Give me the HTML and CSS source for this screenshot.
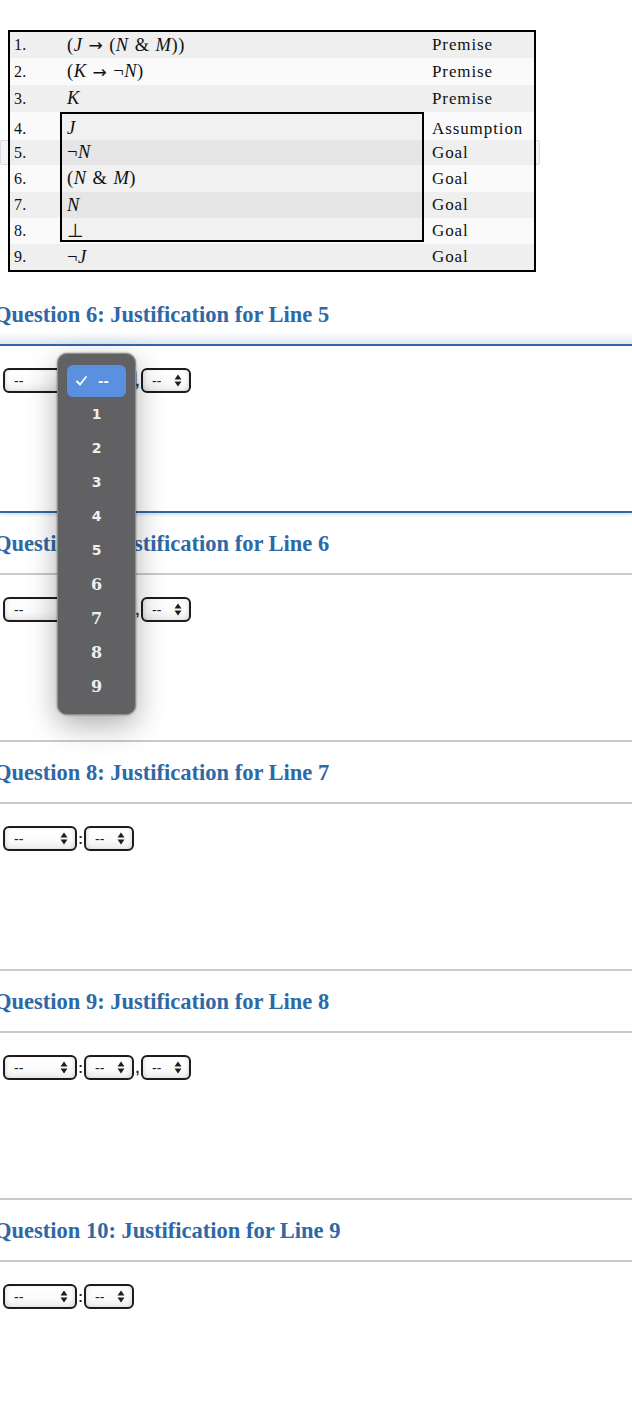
FILE: index.html
```html
<!DOCTYPE html>
<html>
<head>
<meta charset="utf-8">
<link rel="stylesheet" href="styles.css">
</head>
<body>
<div class="page">
  <div class="proof-wrap">
    <div class="row-hl"></div>
    <div class="proof">
      <div class="c num odd r1">1.</div><div class="c fm odd r1">(<i>J</i><span class="op">→</span>(<i>N</i><span class="amp">&amp;</span><i>M</i>))</div><div class="c just odd r1">Premise</div>
      <div class="c num even r2">2.</div><div class="c fm even r2">(<i>K</i><span class="op">→</span>¬<i>N</i>)</div><div class="c just even r2">Premise</div>
      <div class="c num odd r3">3.</div><div class="c fm odd r3"><i>K</i></div><div class="c just odd r3">Premise</div>
      <div class="c num even r4">4.</div><div class="c fm even r4"><i>J</i></div><div class="c just even r4">Assumption</div>
      <div class="c num odd r5">5.</div><div class="c fm odd r5">¬<i>N</i></div><div class="c just odd r5">Goal</div>
      <div class="c num even r6">6.</div><div class="c fm even r6">(<i>N</i><span class="amp">&amp;</span><i>M</i>)</div><div class="c just even r6">Goal</div>
      <div class="c num odd r7">7.</div><div class="c fm odd r7"><i>N</i></div><div class="c just odd r7">Goal</div>
      <div class="c num even r8">8.</div><div class="c fm even r8">⊥</div><div class="c just even r8">Goal</div>
      <div class="c num odd r9">9.</div><div class="c fm odd r9">¬<i>J</i></div><div class="c just odd r9">Goal</div>
      <div class="sub"></div>
    </div>
  </div>

  <section class="q active">
    <div class="qh">Question 6: Justification for Line 5</div>
    <div class="qc">
      <span class="sel wide"><span class="val">--</span><svg class="arr" width="8" height="13" viewBox="0 0 8 13"><polygon points="0.5,5.5 4,0.5 7.5,5.5"/><polygon points="0.5,7.5 4,12.5 7.5,7.5"/></svg></span><span class="sep">:</span><span class="sel narrow focus"><span class="val">--</span><svg class="arr" width="8" height="13" viewBox="0 0 8 13"><polygon points="0.5,5.5 4,0.5 7.5,5.5"/><polygon points="0.5,7.5 4,12.5 7.5,7.5"/></svg></span><span class="sep">,</span><span class="sel narrow"><span class="val">--</span><svg class="arr" width="8" height="13" viewBox="0 0 8 13"><polygon points="0.5,5.5 4,0.5 7.5,5.5"/><polygon points="0.5,7.5 4,12.5 7.5,7.5"/></svg></span>
    </div>
  </section>

  <section class="q after-active">
    <div class="qh">Question 7: Justification for Line 6</div>
    <div class="qc">
      <span class="sel wide"><span class="val">--</span><svg class="arr" width="8" height="13" viewBox="0 0 8 13"><polygon points="0.5,5.5 4,0.5 7.5,5.5"/><polygon points="0.5,7.5 4,12.5 7.5,7.5"/></svg></span><span class="sep">:</span><span class="sel narrow"><span class="val">--</span><svg class="arr" width="8" height="13" viewBox="0 0 8 13"><polygon points="0.5,5.5 4,0.5 7.5,5.5"/><polygon points="0.5,7.5 4,12.5 7.5,7.5"/></svg></span><span class="sep">,</span><span class="sel narrow"><span class="val">--</span><svg class="arr" width="8" height="13" viewBox="0 0 8 13"><polygon points="0.5,5.5 4,0.5 7.5,5.5"/><polygon points="0.5,7.5 4,12.5 7.5,7.5"/></svg></span>
    </div>
  </section>

  <section class="q">
    <div class="qh">Question 8: Justification for Line 7</div>
    <div class="qc">
      <span class="sel wide"><span class="val">--</span><svg class="arr" width="8" height="13" viewBox="0 0 8 13"><polygon points="0.5,5.5 4,0.5 7.5,5.5"/><polygon points="0.5,7.5 4,12.5 7.5,7.5"/></svg></span><span class="sep">:</span><span class="sel narrow"><span class="val">--</span><svg class="arr" width="8" height="13" viewBox="0 0 8 13"><polygon points="0.5,5.5 4,0.5 7.5,5.5"/><polygon points="0.5,7.5 4,12.5 7.5,7.5"/></svg></span>
    </div>
  </section>

  <section class="q">
    <div class="qh">Question 9: Justification for Line 8</div>
    <div class="qc">
      <span class="sel wide"><span class="val">--</span><svg class="arr" width="8" height="13" viewBox="0 0 8 13"><polygon points="0.5,5.5 4,0.5 7.5,5.5"/><polygon points="0.5,7.5 4,12.5 7.5,7.5"/></svg></span><span class="sep">:</span><span class="sel narrow"><span class="val">--</span><svg class="arr" width="8" height="13" viewBox="0 0 8 13"><polygon points="0.5,5.5 4,0.5 7.5,5.5"/><polygon points="0.5,7.5 4,12.5 7.5,7.5"/></svg></span><span class="sep">,</span><span class="sel narrow"><span class="val">--</span><svg class="arr" width="8" height="13" viewBox="0 0 8 13"><polygon points="0.5,5.5 4,0.5 7.5,5.5"/><polygon points="0.5,7.5 4,12.5 7.5,7.5"/></svg></span>
    </div>
  </section>

  <section class="q">
    <div class="qh">Question 10: Justification for Line 9</div>
    <div class="qc">
      <span class="sel wide"><span class="val">--</span><svg class="arr" width="8" height="13" viewBox="0 0 8 13"><polygon points="0.5,5.5 4,0.5 7.5,5.5"/><polygon points="0.5,7.5 4,12.5 7.5,7.5"/></svg></span><span class="sep">:</span><span class="sel narrow"><span class="val">--</span><svg class="arr" width="8" height="13" viewBox="0 0 8 13"><polygon points="0.5,5.5 4,0.5 7.5,5.5"/><polygon points="0.5,7.5 4,12.5 7.5,7.5"/></svg></span>
    </div>
  </section>

  <div class="popup">
    <div class="opt chosen"><svg class="check" width="11" height="10" viewBox="0 0 11 10"><polyline points="1,5.5 4,8.5 10,1" fill="none" stroke="#fff" stroke-width="1.8" stroke-linecap="round" stroke-linejoin="round"/></svg><span>--</span></div>
    <div class="opt sans">1</div>
    <div class="opt sans">2</div>
    <div class="opt sans">3</div>
    <div class="opt sans">4</div>
    <div class="opt sans">5</div>
    <div class="opt serif">6</div>
    <div class="opt serif">7</div>
    <div class="opt serif">8</div>
    <div class="opt serif">9</div>
  </div>
</div>
</body>
</html>
```

FILE: styles.css
```css
html, body {
  margin: 0;
  padding: 0;
  background: #fff;
}
body {
  font-family: "Liberation Serif", serif;
  color: #111;
  overflow: hidden;
}
.page {
  position: relative;
  width: 632px;
  padding-top: 30px;
}

/* proof table */
.proof-wrap {
  position: relative;
  margin-left: 8px;
  width: 528px;
}
.row-hl {
  position: absolute;
  left: -8px;
  top: 110px;
  width: 540px;
  height: 25px;
  box-sizing: border-box;
  border: 1px solid #dcdcdc;
  background: #f4f4f4;
  border-radius: 2px;
}
.proof {
  position: relative;
  display: grid;
  grid-template-columns: 50px 364px 110px;
  grid-template-rows: 26px 27px 27px 28px 25px 27px 26px 26px 26px;
  border: 2px solid #000;
  background: #fafafa;
}
.c {
  display: flex;
  align-items: center;
  font-size: 17px;
  letter-spacing: 0.3px;
  white-space: nowrap;
}
.num { grid-column: 1; }
.fm { grid-column: 2; }
.just { grid-column: 3; }
.r1 { grid-row: 1; }
.r2 { grid-row: 2; }
.r3 { grid-row: 3; }
.r4 { grid-row: 4; padding-top: 5px; }
.r5 { grid-row: 5; }
.r6 { grid-row: 6; }
.r7 { grid-row: 7; }
.r8 { grid-row: 8; }
.r9 { grid-row: 9; }
.odd { background: #efefef; }
.even { background: #fafafa; }
.num {
  padding-left: 4px;
  font-size: 16px;
}
.fm {
  padding-left: 7px;
  font-size: 18.5px;
  letter-spacing: 0.5px;
}
.fm i {
  font-style: italic;
}
.op {
  margin: 0 6px;
  font-family: "DejaVu Sans", sans-serif;
  font-size: 17px;
}
.amp {
  margin: 0 6px;
}
.just {
  padding-left: 8px;
  font-size: 17px;
  letter-spacing: 0.9px;
}
.sub {
  grid-column: 2;
  grid-row: 4 / 9;
  margin-bottom: 2px;
  border: 2px solid #000;
  background: rgba(0, 0, 0, 0.035);
}

/* question sections */
.q {
  border-top: 2px solid #cacaca;
}
.q.active {
  margin-top: 10px;
  border-top-color: transparent;
  border-bottom: 2px solid #2f69a5;
  box-shadow: 0 2px 3px rgba(47, 105, 165, 0.18);
}
.q.after-active {
  border-top: none;
}
.qh {
  height: 62px;
  box-sizing: border-box;
  padding-top: 2px;
  display: flex;
  align-items: center;
  border-bottom: 2px solid #cacaca;
  text-indent: -6px;
  font-family: "Liberation Serif", serif;
  font-weight: bold;
  font-size: 22.5px;
  color: #2d68a7;
  white-space: nowrap;
}
.q.active .qh {
  border-bottom-color: #2f69a5;
  background: linear-gradient(to bottom, rgba(255,255,255,0) 80%, rgba(47,105,165,0.16) 100%);
}
.qc {
  height: 165px;
  box-sizing: border-box;
  padding: 22px 0 0 3px;
  display: flex;
  align-items: flex-start;
}

/* select controls */
.sel {
  display: inline-flex;
  align-items: center;
  justify-content: space-between;
  height: 25px;
  box-sizing: border-box;
  border: 2px solid #1c1c1c;
  border-radius: 6px;
  background: linear-gradient(to bottom, #ffffff 0%, #fbfbfb 60%, #ececec 100%);
  box-shadow: inset 3px 0 4px -2px rgba(0,0,0,0.12), inset -3px 0 4px -2px rgba(0,0,0,0.12);
  padding: 0 7px 0 9px;
  font-family: "Liberation Sans", sans-serif;
  font-size: 14px;
  color: #222;
}
.sel.wide { width: 74px; }
.sel.narrow { width: 50px; }
.sel.focus {
  box-shadow: 0 0 0 3px rgba(90, 143, 224, 0.7);
}
.arr {
  display: block;
  fill: #1e1e1e;
}
.sep {
  width: 7px;
  height: 25px;
  display: inline-flex;
  align-items: center;
  justify-content: center;
  font-family: "Liberation Sans", sans-serif;
  font-size: 14px;
  font-weight: bold;
  color: #222;
}

/* open dropdown popup */
.popup {
  position: absolute;
  left: 57px;
  top: 353px;
  width: 79px;
  box-sizing: border-box;
  padding: 11px 9px;
  background: #616164;
  border: 1px solid #909092;
  border-radius: 10px;
  box-shadow: 0 10px 30px rgba(0,0,0,0.32), 0 0 2px rgba(0,0,0,0.5);
  color: #efefef;
}
.opt {
  height: 34px;
  display: flex;
  align-items: center;
  justify-content: center;
  font-weight: bold;
}
.opt.sans {
  font-family: "DejaVu Sans", sans-serif;
  font-size: 14px;
}
.opt.serif {
  font-family: "DejaVu Serif", serif;
  font-size: 16px;
}
.opt.chosen {
  height: 32px;
  background: #5b8fe0;
  border-radius: 6px;
  justify-content: flex-start;
  padding-left: 9px;
  font-family: "DejaVu Sans", sans-serif;
  font-size: 13px;
  color: #fff;
}
.check {
  margin-right: 11px;
}
```
